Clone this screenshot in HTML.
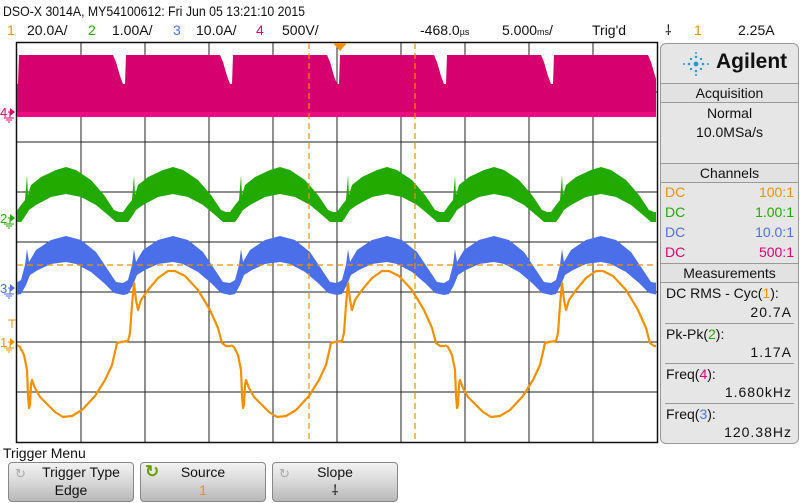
<!DOCTYPE html>
<html><head><meta charset="utf-8"><style>
body{margin:0;width:800px;height:503px;background:#fff;overflow:hidden;font-family:"Liberation Sans",sans-serif;position:relative;color:#111}
.t{position:absolute;white-space:nowrap;font-size:14px;line-height:16px}
.panel{position:absolute;left:660px;top:43px;width:137px;height:399px;background:#e6e6e6;border:1px solid #999;border-radius:6px}
.hdr{position:absolute;left:0;width:137px;height:18px;border-top:1px solid #999;border-bottom:1px solid #999;text-align:center;font-size:14px;line-height:18px;background:#e2e2e2}
.btn{position:absolute;top:462px;width:124px;height:38px;border:1px solid #888;border-radius:4px;background:linear-gradient(#f2f2f2,#d8d8d8 50%,#b8b8b8);font-size:14px;text-align:center;line-height:18px}
</style></head><body>
<div class="t" style="left:3px;top:3px;transform:scaleX(0.88);transform-origin:0 0">DSO-X 3014A, MY54100612: Fri Jun 05 13:21:10 2015</div>
<div class="t" style="left:7px;top:22px;color:#f39000">1</div>
<div class="t" style="left:27px;top:22px">20.0A/</div>
<div class="t" style="left:88px;top:22px;color:#22aa00">2</div>
<div class="t" style="left:112px;top:22px">1.00A/</div>
<div class="t" style="left:173px;top:22px;color:#4a6fe8">3</div>
<div class="t" style="left:196px;top:22px">10.0A/</div>
<div class="t" style="left:256px;top:22px;color:#e0006e">4</div>
<div class="t" style="left:282px;top:22px">500V/</div>
<div class="t" style="left:420px;top:22px">-468.0<span style="font-size:9px">µs</span></div>
<div class="t" style="left:502px;top:22px">5.000<span style="font-size:9px">ms</span>/</div>
<div class="t" style="left:592px;top:22px">Trig'd</div>
<div class="t" style="left:665px;top:22px">⸸</div>
<div class="t" style="left:694px;top:22px;color:#f39000">1</div>
<div class="t" style="left:738px;top:22px">2.25A</div>

<svg style="position:absolute;left:0;top:0" width="800" height="503">
<defs>
<clipPath id="c"><rect x="17" y="43" width="639" height="398"/></clipPath>
<path id="pk" d="M0,117 L0,84 L2,84 L3,55 L97,55 L100,62 L104,76 L107,84 L107,117 Z"/>
<path id="gr" d="M0,212 L5,205 L9,200 L11,175 L12,195 L15,185 L25,177 L40,170 L50,167 L60,170 L75,180 L88,195 L98,210 L103,212 L107,212 L107,222 L100,222 L92,215 L80,205 L65,197 L50,194 L35,197 L20,205 L13,210 L8,218 L5,222 L0,222 Z"/>
<path id="bl" d="M0,283 L5,280 L9,265 L11,249 L13,262 L20,250 L35,240 L50,236 L65,240 L80,252 L92,270 L100,282 L107,283 L107,295 L98,293 L88,283 L75,272 L60,264 L50,262 L35,264 L22,270 L14,275 L10,285 L5,294 L0,295 Z"/>
<polyline id="or" fill="none" stroke="#f39000" stroke-width="2.2" stroke-linejoin="round" points="17,345 20,347 24,355 27,370 28,395 29,408 30,405 31,385 32,380 35,388 40,397 48,405 55,412 63,417 72,416 82,410 95,396 105,380 112,365 115,352 117,343 121,342 128,341 130,333 132,305 134,283 136,300 138,310 141,300 148,290 158,278 168,271 175,271 185,276 198,290 210,310 218,328 222,343 226,346 231,346"/>
</defs>
<g stroke="#222" stroke-width="1">
<line x1="81" y1="43" x2="81" y2="442"/><line x1="145" y1="43" x2="145" y2="442"/><line x1="209" y1="43" x2="209" y2="442"/><line x1="273" y1="43" x2="273" y2="442"/><line x1="337" y1="43" x2="337" y2="442"/><line x1="401" y1="43" x2="401" y2="442"/><line x1="465" y1="43" x2="465" y2="442"/><line x1="529" y1="43" x2="529" y2="442"/><line x1="593" y1="43" x2="593" y2="442"/>
<line x1="17" y1="92" x2="657" y2="92"/><line x1="17" y1="142" x2="657" y2="142"/><line x1="17" y1="192" x2="657" y2="192"/><line x1="17" y1="242" x2="657" y2="242"/><line x1="17" y1="292" x2="657" y2="292"/><line x1="17" y1="342" x2="657" y2="342"/><line x1="17" y1="392" x2="657" y2="392"/>
</g>
<rect x="16.5" y="42.5" width="641" height="400" fill="none" stroke="#111" stroke-width="1.5"/>
<g clip-path="url(#c)">
<g fill="#d6006e"><use href="#pk" x="-91"/><use href="#pk" x="16"/><use href="#pk" x="123"/><use href="#pk" x="230"/><use href="#pk" x="337"/><use href="#pk" x="444"/><use href="#pk" x="551"/></g>
<rect x="17" y="112" width="640" height="5" fill="#ec0a80"/>
<g fill="#22aa00"><use href="#gr" x="-91"/><use href="#gr" x="16"/><use href="#gr" x="123"/><use href="#gr" x="230"/><use href="#gr" x="337"/><use href="#gr" x="444"/><use href="#gr" x="551"/></g>
<g fill="#4a6fe8"><use href="#bl" x="-91"/><use href="#bl" x="16"/><use href="#bl" x="123"/><use href="#bl" x="230"/><use href="#bl" x="337"/><use href="#bl" x="444"/><use href="#bl" x="551"/></g>
<use href="#or"/><use href="#or" x="214"/><use href="#or" x="428"/><use href="#or" x="-214"/>
</g>
<g stroke="#f39000" stroke-width="1.2" stroke-dasharray="6,4">
<line x1="309" y1="43" x2="309" y2="442"/><line x1="415" y1="43" x2="415" y2="442"/><line x1="17" y1="265" x2="657" y2="265"/>
</g>
<polygon points="333,43 347,43 340,51" fill="#f39000"/>
<g font-family="Liberation Sans" font-size="13">
<text x="0" y="117" fill="#e0006e">4</text><polygon points="10,108 15,112 10,116" fill="#e0006e"/><path d="M8,112h2v6M4,118h10M6,120h6M8,122h2" stroke="#e0006e" fill="none"/>
<text x="0" y="223" fill="#22aa00">2</text><polygon points="10,214 15,218 10,222" fill="#22aa00"/><path d="M8,218h2v6M4,224h10M6,226h6M8,228h2" stroke="#22aa00" fill="none"/>
<text x="0" y="293" fill="#4a6fe8">3</text><polygon points="10,284 15,288 10,292" fill="#4a6fe8"/><path d="M8,288h2v6M4,294h10M6,296h6M8,298h2" stroke="#4a6fe8" fill="none"/>
<text x="0" y="347" fill="#f39000">1</text><polygon points="10,338 15,342 10,346" fill="#f39000"/><path d="M8,342h2v6M4,348h10M6,350h6M8,352h2M8,320h8M12,320v8" stroke="#f39000" fill="none"/>
</g>
</svg>

<div class="panel">
 <svg style="position:absolute;left:20px;top:8px" width="30" height="24"><g fill="#2aa0d0"><circle cx="15" cy="12" r="2.5"/><circle cx="15" cy="5" r="1.3"/><circle cx="15" cy="19" r="1.3"/><circle cx="8" cy="12" r="1.3"/><circle cx="22" cy="12" r="1.3"/><circle cx="10" cy="7" r="1.2"/><circle cx="20" cy="7" r="1.2"/><circle cx="10" cy="17" r="1.2"/><circle cx="20" cy="17" r="1.2"/><circle cx="15" cy="1" r="1"/><circle cx="15" cy="23" r="1"/><circle cx="3" cy="12" r="1"/><circle cx="27" cy="12" r="1"/></g></svg>
 <div style="position:absolute;left:55px;top:6px;font-size:21px;font-weight:bold">Agilent</div>
 <div class="hdr" style="top:39px">Acquisition</div>
 <div class="t" style="left:0;width:137px;text-align:center;top:61px">Normal</div>
 <div class="t" style="left:0;width:137px;text-align:center;top:80px">10.0MSa/s</div>
 <div class="hdr" style="top:119px">Channels</div>
 <div class="t" style="left:4px;top:140px;color:#f39000">DC</div><div class="t" style="right:4px;top:140px;color:#f39000">100:1</div>
 <div class="t" style="left:4px;top:160px;color:#22aa00">DC</div><div class="t" style="right:4px;top:160px;color:#22aa00">1.00:1</div>
 <div class="t" style="left:4px;top:180px;color:#4a6fe8">DC</div><div class="t" style="right:4px;top:180px;color:#4a6fe8">10.0:1</div>
 <div class="t" style="left:4px;top:200px;color:#e0006e">DC</div><div class="t" style="right:4px;top:200px;color:#e0006e">500:1</div>
 <div class="hdr" style="top:219px">Measurements</div>
 <div class="t" style="left:5px;top:241px">DC RMS - Cyc(<span style="color:#f39000">1</span>):</div>
 <div class="t" style="right:6px;top:260px;letter-spacing:1px">20.7A</div>
 <div style="position:absolute;left:4px;right:4px;top:279px;border-top:1px solid #999"></div>
 <div class="t" style="left:5px;top:282px">Pk-Pk(<span style="color:#22aa00">2</span>):</div>
 <div class="t" style="right:6px;top:300px;letter-spacing:1px">1.17A</div>
 <div style="position:absolute;left:4px;right:4px;top:319px;border-top:1px solid #999"></div>
 <div class="t" style="left:5px;top:322px">Freq(<span style="color:#e0006e">4</span>):</div>
 <div class="t" style="right:6px;top:340px;letter-spacing:1px">1.680kHz</div>
 <div style="position:absolute;left:4px;right:4px;top:359px;border-top:1px solid #999"></div>
 <div class="t" style="left:5px;top:362px">Freq(<span style="color:#4a6fe8">3</span>):</div>
 <div class="t" style="right:6px;top:380px;letter-spacing:1px">120.38Hz</div>
</div>

<div class="t" style="left:3px;top:445px">Trigger Menu</div>
<div class="btn" style="left:8px"><div style="padding-left:20px">Trigger Type</div><div>Edge</div><span style="position:absolute;left:6px;top:2px;color:#aaa;font-size:13px">↻</span></div>
<div class="btn" style="left:140px"><div>Source</div><div style="color:#f39000">1</div><span style="position:absolute;left:4px;top:0;color:#6aa000;font-size:17px;font-weight:bold">↻</span></div>
<div class="btn" style="left:272px"><div>Slope</div><div>⸸</div><span style="position:absolute;left:6px;top:2px;color:#aaa;font-size:13px">↻</span></div>
</body></html>
